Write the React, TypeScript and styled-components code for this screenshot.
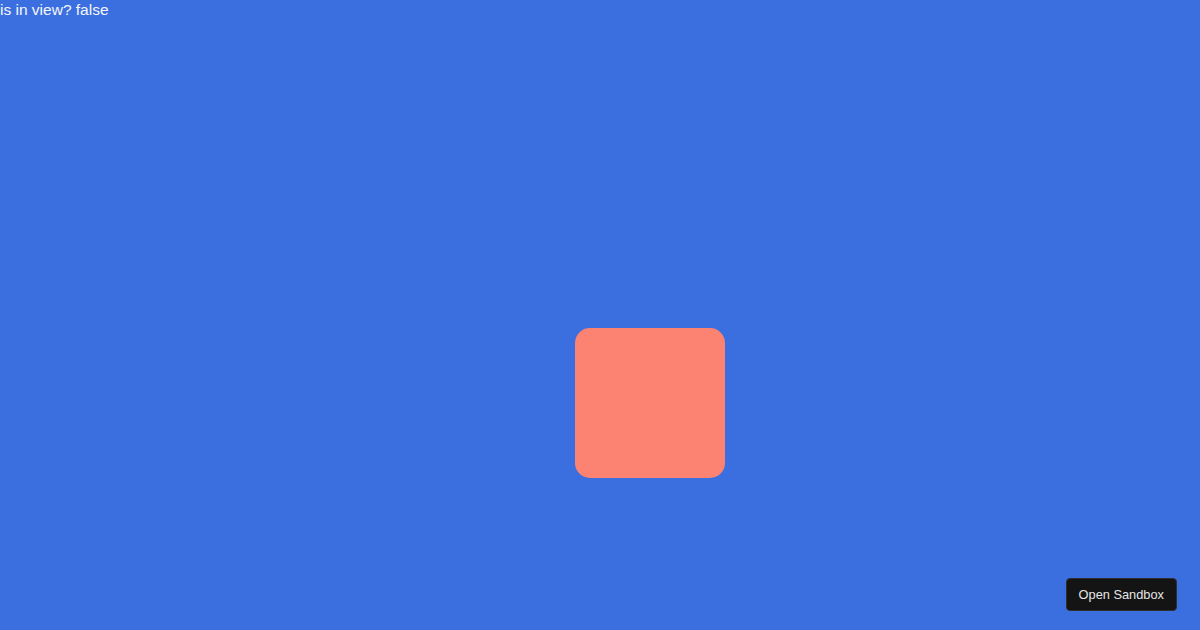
import { createGlobalStyle, styled } from "styled-components";

const GlobalStyle = createGlobalStyle`
    html, body {
        margin:0;
        padding:0;
        height:100%;
        background-color:#3b6fe0;
        font-family: "Liberation Sans", Arial, sans-serif;
    }
    #root {
        min-height:100vh;
    }
`;

const Page = styled.div`
    display:flex;
    flex-direction:column;
    min-height:100vh;
    color:#ffffff;
`;

const Status = styled.div`
    font-size:15.5px;
    line-height:19px;
    color:#f4f6fc;
`;

const Stage = styled.div`
    display:flex;
    justify-content:center;
    padding:309px 0 0 100px;
`;

const Box = styled.div`
    width:150px;
    height:150px;
    border-radius:15px;
    background-color:#fc8272;
`;

const SandboxButton = styled.button`
    position:fixed;
    right:23px;
    bottom:19px;
    height:33px;
    padding:0 12px;
    background-color:#141414;
    color:#e6e6e6;
    border:1px solid #2e2e2e;
    border-radius:4px;
    font-size:12.8px;
    font-family: "Liberation Sans", Arial, sans-serif;
    cursor:pointer;
`;

export default function App(){
    const inView = false;
    return (
        <>
            <GlobalStyle />
            <Page>
                <Status>is in view? {String(inView)}</Status>
                <Stage>
                    <Box />
                </Stage>
            </Page>
            <SandboxButton>Open Sandbox</SandboxButton>
        </>
    )
}
